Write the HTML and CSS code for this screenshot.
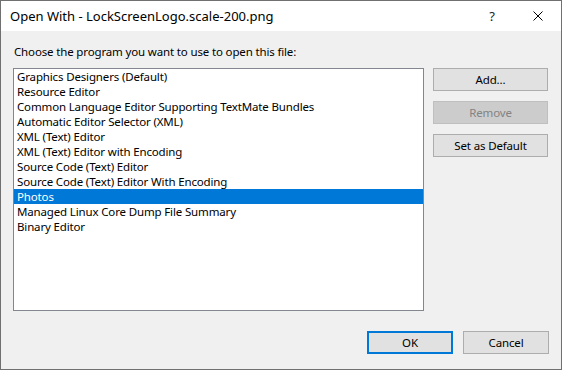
FILE: index.html
```html
<!DOCTYPE html>
<html lang="en">
<head>
    <meta charset="UTF-8">
    <title>Open With</title>
    <link rel="stylesheet" href="styles.css">
</head>
<body>
    <div class="dialog">
        <div class="titlebar">
            <span class="title">Open With - LockScreenLogo.scale-200.png</span>
            <div class="caption-buttons">
                <span class="caption-btn help">?</span>
                <span class="caption-btn close">
                    <svg width="10" height="10" viewBox="0 0 10 10">
                        <path d="M0.5 0.5 L9.5 9.5 M9.5 0.5 L0.5 9.5" stroke="#000" stroke-width="1" fill="none"/>
                    </svg>
                </span>
            </div>
        </div>
        <div class="content">
            <div class="prompt">Choose the program you want to use to open this file:</div>
            <div class="main">
                <ul class="program-list">
                    <li>Graphics Designers (Default)</li>
                    <li>Resource Editor</li>
                    <li>Common Language Editor Supporting TextMate Bundles</li>
                    <li>Automatic Editor Selector (XML)</li>
                    <li>XML (Text) Editor</li>
                    <li>XML (Text) Editor with Encoding</li>
                    <li>Source Code (Text) Editor</li>
                    <li>Source Code (Text) Editor With Encoding</li>
                    <li class="selected">Photos</li>
                    <li>Managed Linux Core Dump File Summary</li>
                    <li>Binary Editor</li>
                </ul>
                <div class="side-buttons">
                    <button class="btn wide">Add...</button>
                    <button class="btn wide" disabled>Remove</button>
                    <button class="btn wide">Set as Default</button>
                </div>
            </div>
            <div class="footer">
                <button class="btn default">OK</button>
                <button class="btn">Cancel</button>
            </div>
        </div>
    </div>
</body>
</html>
```

FILE: styles.css
```css
body {
    margin: 0;
    font-family: "Segoe UI", "Noto Sans", sans-serif;
    font-size: 11.5px;
    letter-spacing: -0.15px;
    color: #000;
}

.dialog {
    width: 562px;
    height: 370px;
    box-sizing: border-box;
    border: 1px solid #707070;
    background-color: #f0f0f0;
    display: flex;
    flex-direction: column;
}

.titlebar {
    height: 30px;
    background-color: #fff;
    display: flex;
    align-items: center;
    justify-content: space-between;
}

.title {
    padding-left: 9px;
    padding-bottom: 1px;
    font-size: 13px;
    letter-spacing: 0;
}

.caption-buttons {
    display: flex;
    height: 100%;
}

.caption-btn {
    width: 46px;
    height: 30px;
    display: flex;
    align-items: center;
    justify-content: center;
}

.help {
    font-size: 13px;
    color: #222;
}

.content {
    flex: 1;
    display: flex;
    flex-direction: column;
    padding: 13px 12px 15px 12px;
}

.prompt {
    line-height: 15px;
    padding-left: 1px;
    margin-bottom: 9px;
}

.main {
    display: flex;
    gap: 9px;
}

.program-list {
    list-style-type: none;
    margin: 0;
    padding: 0;
    width: 411px;
    height: 243px;
    box-sizing: border-box;
    border: 1px solid #828790;
    background-color: #fff;
}

.program-list li {
    height: 15px;
    line-height: 15px;
    padding-left: 3px;
    white-space: nowrap;
}

.program-list li.selected {
    background-color: #0078d7;
    color: #fff;
}

.side-buttons {
    display: flex;
    flex-direction: column;
    gap: 10px;
}

.btn {
    font-family: inherit;
    font-size: 11.5px;
    letter-spacing: -0.15px;
    width: 86px;
    height: 23px;
    padding: 0;
    box-sizing: border-box;
    border: 1px solid #adadad;
    background-color: #e1e1e1;
    color: #000;
}

.btn.wide {
    width: 115px;
}

.btn:disabled {
    background-color: #cccccc;
    border-color: #bfbfbf;
    color: #838383;
}

.btn.default {
    border: 2px solid #0078d7;
}

.footer {
    margin-top: auto;
    display: flex;
    justify-content: flex-end;
    gap: 10px;
}
```
